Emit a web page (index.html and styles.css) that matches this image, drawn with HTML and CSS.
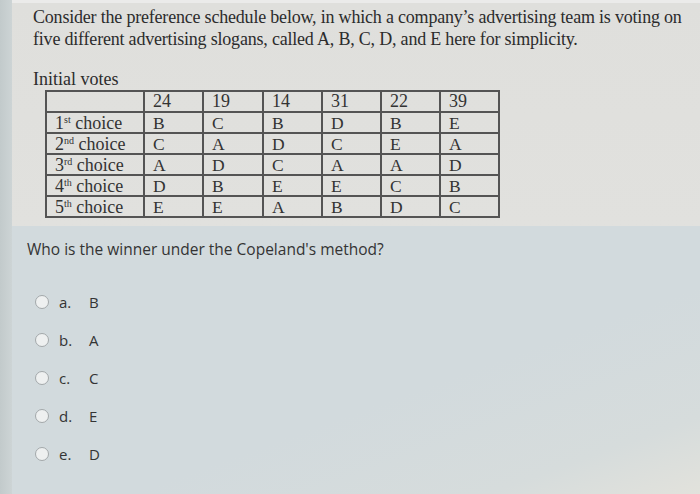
FILE: index.html
```html
<!DOCTYPE html>
<html>
<head>
<meta charset="utf-8">
<link rel="stylesheet" href="styles.css">
</head>
<body>
<div class="shell">
  <div class="edge"></div>
  <div class="main">
    <div class="figure">
      <p class="title">Consider the preference schedule below, in which a company’s advertising team is voting on<br>five different advertising slogans, called A, B, C, D, and E here for simplicity.</p>
      <p class="caption">Initial votes</p>
      <table class="schedule">
        <colgroup>
          <col class="c-label"><col class="c-a"><col class="c-b"><col class="c-a"><col class="c-a"><col class="c-a"><col class="c-a">
        </colgroup>
        <tr class="head"><td></td><td>24</td><td>19</td><td>14</td><td>31</td><td>22</td><td>39</td></tr>
        <tr><td class="lbl">1<sup>st</sup> choice</td><td>B</td><td>C</td><td>B</td><td>D</td><td>B</td><td>E</td></tr>
        <tr><td class="lbl">2<sup>nd</sup> choice</td><td>C</td><td>A</td><td>D</td><td>C</td><td>E</td><td>A</td></tr>
        <tr><td class="lbl">3<sup>rd</sup> choice</td><td>A</td><td>D</td><td>C</td><td>A</td><td>A</td><td>D</td></tr>
        <tr><td class="lbl">4<sup>th</sup> choice</td><td>D</td><td>B</td><td>E</td><td>E</td><td>C</td><td>B</td></tr>
        <tr><td class="lbl">5<sup>th</sup> choice</td><td>E</td><td>E</td><td>A</td><td>B</td><td>D</td><td>C</td></tr>
      </table>
    </div>
    <div class="quiz">
      <p class="question">Who is the winner under the Copeland's method?</p>
      <div class="options">
        <label class="option"><span class="radio"></span><span class="key">a.</span><span class="val">B</span></label>
        <label class="option"><span class="radio"></span><span class="key">b.</span><span class="val">A</span></label>
        <label class="option"><span class="radio"></span><span class="key">c.</span><span class="val">C</span></label>
        <label class="option"><span class="radio"></span><span class="key">d.</span><span class="val">E</span></label>
        <label class="option"><span class="radio"></span><span class="key">e.</span><span class="val">D</span></label>
      </div>
    </div>
  </div>
</div>
</body>
</html>
```
FILE: styles.css
```css
html, body {
  margin: 0;
  padding: 0;
}
body {
  width: 700px;
  height: 494px;
  overflow: hidden;
  background: #d3dbde;
}
.shell {
  display: flex;
  height: 494px;
}
.edge {
  width: 12px;
  flex: none;
  background: linear-gradient(90deg, #c2cacb, #cdd4d5);
}
.main {
  flex: 1;
  display: flex;
  flex-direction: column;
}
.figure {
  height: 220px;
  border-top: 3px solid #ebebea;
  background: linear-gradient(180deg, #dfdfdc, #e1e1de);
  padding: 3px 0 0 21px;
  box-sizing: content-box;
  font-family: "Liberation Serif", "Times New Roman", serif;
  color: #2c2c2c;
}
.title {
  margin: 0;
  font-size: 18px;
  line-height: 22px;
  letter-spacing: -0.2px;
}
.caption {
  margin: 18px 0 0;
  font-size: 18px;
  line-height: 22px;
}
.schedule {
  margin-left: 12px;
  border-collapse: collapse;
  table-layout: fixed;
  width: 452px;
  font-size: 17.5px;
  color: #333;
}
.c-label { width: 98px; }
.c-a { width: 59px; }
.c-b { width: 60px; }
.schedule td {
  border: 2px solid #545454;
  height: 18px;
  padding: 1px 0 0 8px;
  line-height: 17px;
  vertical-align: middle;
  white-space: nowrap;
}
.schedule .head td {
  font-size: 18px;
  height: 19px;
  padding-top: 0;
}
.schedule .lbl {
  padding-left: 8px;
  font-size: 18px;
}
.schedule sup {
  font-size: 10px;
  line-height: 0;
  vertical-align: 6px;
}
.quiz {
  flex: 1;
  padding: 13px 0 0 15px;
  font-family: "Open Sans", "Noto Sans", sans-serif;
  color: #343434;
  background: linear-gradient(160deg, #d2dadd 60%, #d6dcdc 85%, #e2e2dc 100%);
}
.question {
  margin: 0;
  font-size: 15.5px;
  line-height: 20px;
}
.options {
  margin-top: 24px;
  display: flex;
  flex-direction: column;
}
.option {
  display: flex;
  align-items: center;
  height: 38px;
  font-size: 15px;
}
.radio {
  width: 12px;
  height: 12px;
  margin-left: 8px;
  border: 1.5px solid #a3a8aa;
  border-radius: 50%;
  background: #eef0f0;
  flex: none;
}
.key {
  margin-left: 10px;
  width: 30px;
}
.val {
  margin-left: 0;
}
```
